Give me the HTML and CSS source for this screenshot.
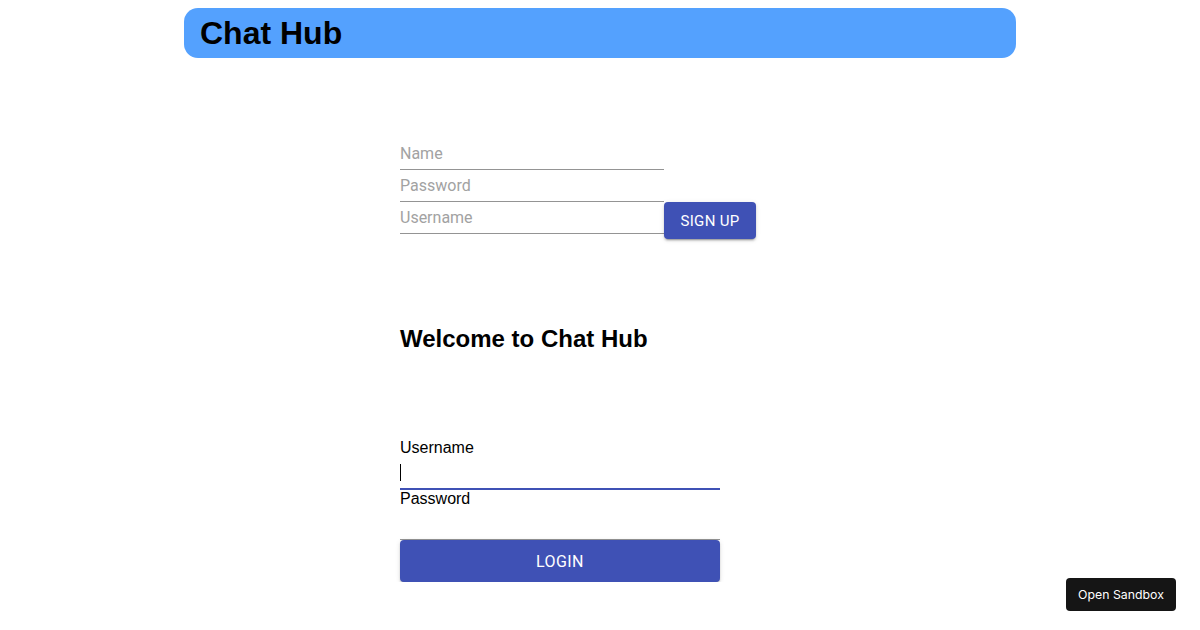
FILE: index.html
```html
<!DOCTYPE html>
<html lang="en">

<head>
  <meta charset="UTF-8">
  <meta name="viewport" content="width=device-width, initial-scale=1.0">
  <title>Chat Hub</title>
  <link rel="stylesheet" href="styles.css">
</head>

<body>
  <div class="page">
    <!-- Top bar -->
    <header class="topbar">
      <h1>Chat Hub</h1>
    </header>

    <main class="content">
      <!-- Sign up -->
      <form class="signup">
        <div class="signup-row">
          <input class="line-input" type="text" placeholder="Name">
        </div>
        <div class="signup-row">
          <input class="line-input" type="password" placeholder="Password">
        </div>
        <div class="signup-row">
          <input class="line-input" type="text" placeholder="Username">
          <button type="button" class="btn btn-small">Sign up</button>
        </div>
      </form>

      <h2 class="welcome">Welcome to Chat Hub</h2>

      <!-- Login -->
      <form class="login">
        <label for="login-user">Username</label>
        <div class="field focused">
          <input id="login-user" class="line-input wide" type="text">
        </div>
        <label for="login-pass">Password</label>
        <div class="field">
          <input id="login-pass" class="line-input wide" type="password">
        </div>
        <button type="button" class="btn btn-full">Login</button>
      </form>
    </main>
  </div>

  <a class="sandbox" href="#">Open Sandbox</a>
</body>

</html>
```

FILE: styles.css
```css
body {
  margin: 0;
  padding: 8px 0 0;
  font-family: "Liberation Sans", Arial, sans-serif;
  color: #000;
  background: #fff;
}

.page {
  width: 832px;
  margin: 0 auto;
}

.topbar {
  height: 50px;
  background-color: #54a1fe;
  border-radius: 14px;
  padding: 0 16px;
  display: flex;
  align-items: center;
}

.topbar h1 {
  margin: 0;
  font-size: 32px;
  font-weight: bold;
}

.content {
  width: 400px;
  margin: 0 auto;
}

/* sign up */
.signup {
  margin-top: 80px;
  display: flex;
  flex-direction: column;
}

.signup-row {
  display: flex;
  align-items: flex-start;
}

.line-input {
  width: 264px;
  height: 32px;
  box-sizing: border-box;
  padding: 6px 0 7px;
  border: none;
  border-bottom: 1px solid rgba(0, 0, 0, 0.42);
  outline: none;
  font-family: Roboto, "Liberation Sans", sans-serif;
  font-size: 16px;
  color: rgba(0, 0, 0, 0.87);
  background: transparent;
}

.line-input::placeholder {
  color: #a2a2a2;
}

.line-input.wide {
  width: 320px;
}

.btn {
  border: none;
  border-radius: 4px;
  background-color: #3f51b5;
  color: #fff;
  font-family: Roboto, "Liberation Sans", sans-serif;
  text-transform: uppercase;
  letter-spacing: 0.4px;
  cursor: pointer;
  box-shadow: 0 3px 1px -2px rgba(0, 0, 0, 0.2), 0 2px 2px 0 rgba(0, 0, 0, 0.14), 0 1px 5px 0 rgba(0, 0, 0, 0.12);
}

.btn-small {
  width: 92px;
  height: 37px;
  font-size: 15px;
  letter-spacing: 0.3px;
}

.welcome {
  margin: 86px 0 0;
  font-size: 24px;
  font-weight: bold;
  line-height: 28px;
}

/* login */
.login {
  margin-top: 86px;
  display: flex;
  flex-direction: column;
  align-items: flex-start;
}

.login label {
  font-size: 16px;
  line-height: 18px;
}

.field {
  position: relative;
}

.field.focused .line-input {
  height: 33px;
  border-bottom: 2px solid #3f51b5;
}

/* text caret of the focused field */
.field.focused::before {
  content: "";
  position: absolute;
  left: 0;
  top: 7px;
  width: 1px;
  height: 17px;
  background: #000;
}

.btn-full {
  width: 320px;
  height: 42px;
  font-size: 16px;
}

.sandbox {
  position: fixed;
  right: 24px;
  bottom: 19px;
  width: 110px;
  height: 33px;
  display: flex;
  align-items: center;
  justify-content: center;
  background: #151515;
  color: #fff;
  border-radius: 4px;
  font-family: Inter, "Liberation Sans", sans-serif;
  font-size: 12.3px;
  text-decoration: none;
}
```
